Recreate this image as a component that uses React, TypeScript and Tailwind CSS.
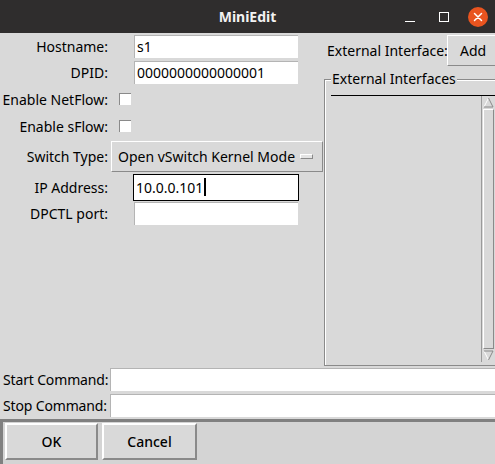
import React from "react";

const entry = "h-[23px] bg-white border-l border-t border-[#b4b4b4] px-[2px] text-[14px] leading-[21px] text-black";

function Entry({ value = "", className = "" }: { value?: string; className?: string }) {
  return <div className={`${entry} ${className}`}>{value}</div>;
}

function Check() {
  return <div className="w-[12px] h-[12px] bg-white border-l border-t border-[#8a8a8a]" />;
}

function Row({ label, height, children }: { label: string; height: string; children: React.ReactNode }) {
  return (
    <div className={`flex items-center ${height}`}>
      <div className="w-[110px] pr-[2px] text-right whitespace-nowrap">{label}</div>
      <div className="flex-1 flex items-center">{children}</div>
    </div>
  );
}

function Scrollbar() {
  return (
    <div className="w-[14px] flex flex-col border-l border-[#9a9a9a] bg-[#d9d9d9]">
      <svg width="13" height="13" viewBox="0 0 13 13" className="shrink-0">
        <polygon points="6.5,2 11,11 2,11" fill="#d9d9d9" />
        <polyline points="2,11 6.5,2" stroke="#ffffff" strokeWidth="1" fill="none" />
        <polyline points="6.5,2 11,11 2,11" stroke="#8a8a8a" strokeWidth="1" fill="none" />
      </svg>
      <div className="flex-1 mx-[1px] border-l border-t border-white border-r border-b border-r-[#8a8a8a] border-b-[#8a8a8a]" />
      <svg width="13" height="13" viewBox="0 0 13 13" className="shrink-0">
        <polygon points="2,2 11,2 6.5,11" fill="#d9d9d9" />
        <polyline points="2,2 6.5,11" stroke="#ffffff" strokeWidth="1" fill="none" />
        <polyline points="2,2 11,2 6.5,11" stroke="#8a8a8a" strokeWidth="1" fill="none" />
      </svg>
    </div>
  );
}

export default function App() {
  return (
    <div className="w-[495px] h-[464px] overflow-hidden bg-[#d9d9d9] flex flex-col font-['Noto_Sans',sans-serif] text-[14px] text-black">
      {/* title bar */}
      <div className="h-[33px] shrink-0 bg-[#2f2d2d] flex items-center relative">
        <div className="flex-1 text-center font-bold text-[14px] text-[#f2f2f2]">MiniEdit</div>
        <div className="absolute right-0 top-0 h-[33px] flex items-center">
          <div className="w-[34px] h-[33px] flex items-center justify-center">
            <div className="w-[10px] h-[1.5px] bg-white mt-[10px]" />
          </div>
          <div className="w-[34px] h-[33px] flex items-center justify-center">
            <div className="w-[10px] h-[10px] border border-white" />
          </div>
          <div className="w-[34px] h-[33px] flex items-center justify-center">
            <div className="w-[20px] h-[20px] rounded-full bg-[#e9541f] flex items-center justify-center">
              <svg width="10" height="10" viewBox="0 0 10 10">
                <path d="M1.5 1.5 L8.5 8.5 M8.5 1.5 L1.5 8.5" stroke="#fff" strokeWidth="1.5" strokeLinecap="round" />
              </svg>
            </div>
          </div>
        </div>
      </div>

      {/* main */}
      <div className="flex h-[333px] shrink-0">
        <div className="w-[324px] pt-[1px] flex flex-col">
          <Row label="Hostname:" height="h-[25px]">
            <Entry value="s1" className="ml-[24px] w-[164px]" />
          </Row>
          <Row label="DPID:" height="h-[26px]">
            <Entry value="0000000000000001" className="ml-[24px] w-[164px]" />
          </Row>
          <Row label="Enable NetFlow:" height="h-[28px]">
            <div className="ml-[9px]"><Check /></div>
          </Row>
          <Row label="Enable sFlow:" height="h-[26px]">
            <div className="ml-[9px]"><Check /></div>
          </Row>
          <Row label="Switch Type:" height="h-[34px]">
            <div className="ml-[1px] w-[212px] h-[31px] flex items-center justify-between pl-[6px] pr-[9px] border-l border-t border-white border-r border-b border-r-[#8a8a8a] border-b-[#8a8a8a] whitespace-nowrap">
              <span>Open vSwitch Kernel Mode</span>
              <div className="w-[13px] h-[5px] bg-[#e4e4e4] border-l border-t border-white border-r border-b border-r-[#8a8a8a] border-b-[#8a8a8a]" />
            </div>
          </Row>
          <Row label="IP Address:" height="h-[28px]">
            <div className="ml-[23px] w-[166px] h-[27px] border border-black bg-white px-[2px] flex items-center text-[14px] text-black">
              10.0.0.101<span className="w-[2px] h-[18px] bg-black ml-[1px]" />
            </div>
          </Row>
          <Row label="DPCTL port:" height="h-[24px]">
            <Entry className="ml-[24px] w-[164px]" />
          </Row>
        </div>

        <div className="flex-1 flex flex-col">
          <div className="h-[33px] pt-[2px] flex items-start">
            <div className="mt-[5px] ml-[3px] w-[120px] whitespace-nowrap">External Interface:</div>
            <div className="h-[31px] flex-1 pl-[12px] flex items-center border-l border-t border-white border-b border-b-[#8a8a8a]">Add</div>
          </div>
          <div className="relative mt-[13px] h-[287px] border-l border-t border-b border-[#8a8a8a] shadow-[inset_1px_1px_0_#ffffff] pl-[6px] pt-[15px] pb-[3px] flex flex-col">
            <div className="absolute -top-[11px] left-[6px] px-[1px] bg-[#d9d9d9] leading-[20px] whitespace-nowrap">External Interfaces</div>
            <div className="flex-1 flex border-t border-black">
              <div className="flex-1" />
              <Scrollbar />
            </div>
          </div>
        </div>
      </div>

      {/* command rows */}
      <div className="mt-[1px] flex items-center h-[25px]">
        <div className="w-[110px] pl-[3px] whitespace-nowrap tracking-[-0.15px]">Start Command:</div>
        <Entry className="flex-1" />
      </div>
      <div className="mt-[1px] flex items-center h-[25px]">
        <div className="w-[110px] pl-[3px] whitespace-nowrap tracking-[-0.15px]">Stop Command:</div>
        <Entry className="flex-1" />
      </div>

      {/* buttons */}
      <div className="flex-1 mt-[1px] border-l-[3px] border-t-[3px] border-[#808080] bg-[#d4d4d4] flex items-start gap-[4px] pl-[2px] pt-[1px]">
        <div className="w-[93px] h-[37px] flex items-center justify-center font-medium bg-[#d9d9d9] border-l-2 border-t-2 border-white border-r-2 border-b-2 border-r-[#8a8a8a] border-b-[#8a8a8a]">OK</div>
        <div className="w-[95px] h-[37px] flex items-center justify-center font-medium bg-[#d9d9d9] border-l-2 border-t-2 border-white border-r-2 border-b-2 border-r-[#8a8a8a] border-b-[#8a8a8a]">Cancel</div>
      </div>
    </div>
  );
}
